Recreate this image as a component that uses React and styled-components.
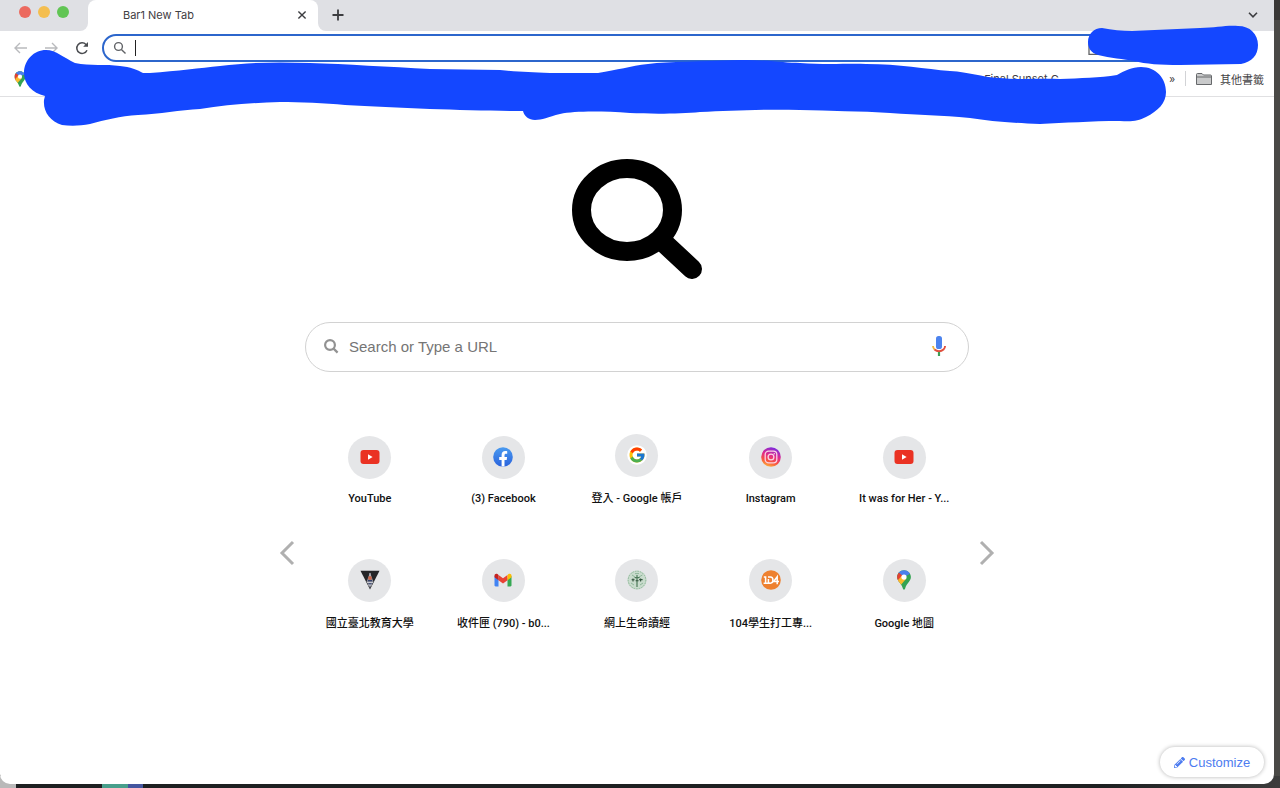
import React from "react";
import styled, { createGlobalStyle } from "styled-components";
import { FaPencilAlt } from "react-icons/fa";
import { FcGoogle } from "react-icons/fc";

const YouTubeIcon = () => (
  <svg width="20" height="20" viewBox="0 0 20 20">
    <rect x="0.5" y="3" width="19" height="14" rx="3" fill="#ea3223" />
    <path d="M8 7.2 12.6 10 8 12.8z" fill="#fff" />
  </svg>
);

const FacebookIcon = () => (
  <svg width="20" height="20" viewBox="0 0 20 20">
    <defs>
      <linearGradient id="fb" x1="0" y1="0" x2="0" y2="1">
        <stop offset="0" stopColor="#4a9bf0" />
        <stop offset="1" stopColor="#2a62dc" />
      </linearGradient>
    </defs>
    <circle cx="10" cy="10" r="9.8" fill="url(#fb)" />
    <path
      d="M8.6 19.6v-6.7H6.2V10h2.4V8c0-2.500 1.400-3.900 3.700-3.900.9 0 1.900.2 1.900.2v2.400h-1.200c-1.100 0-1.500.7-1.500 1.500V10h2.600l-.4 2.900h-2.200v6.700z"
      fill="#fff"
    />
  </svg>
);

const InstagramIcon = () => (
  <svg width="20" height="20" viewBox="0 0 20 20">
    <defs>
      <linearGradient id="ig" x1="0.25" y1="1" x2="0.6" y2="0">
        <stop offset="0" stopColor="#fdb93d" />
        <stop offset="0.3" stopColor="#f8543f" />
        <stop offset="0.6" stopColor="#e02a8c" />
        <stop offset="1" stopColor="#7a2be0" />
      </linearGradient>
    </defs>
    <circle cx="10" cy="10" r="9.8" fill="url(#ig)" />
    <g fill="none" stroke="#fbd3e4" strokeWidth="1.3">
      <rect x="4.2" y="4.2" width="11.6" height="11.6" rx="3.4" />
      <circle cx="10" cy="10" r="2.9" />
    </g>
    <circle cx="13.3" cy="6.7" r="0.8" fill="#fbd3e4" />
  </svg>
);

const GoogleIcon = () => (
  <svg width="20" height="20" viewBox="0 0 20 20">
    <circle cx="10" cy="10" r="9.8" fill="#fff" />
    <FcGoogle x="1" y="1" size={18} />
  </svg>
);

const UniversityIcon = () => (
  <svg width="20" height="20" viewBox="0 0 20 20">
    <path d="M0.5 0.8h19L10 19.6z" fill="#252628" />
    <path d="M10 2.5 6.6 11.4 10 18l3.4-6.6z" fill="#8b8d99" />
    <path d="M10 3v3.5M7 12.6h6M8 15h4" stroke="#d5d6db" strokeWidth="0.9" />
    <circle cx="10" cy="8" r="1.9" fill="#c9674a" />
    <path d="M8 10.6h4M8.4 13.8h3.2" stroke="#33416b" strokeWidth="1.1" />
  </svg>
);

const GmailIcon = () => (
  <svg width="20" height="20" viewBox="0 0 20 20">
    <path d="M1.5 6v9.3c0 .6.5 1.1 1.1 1.1h2.9V8.5z" fill="#4284f3" />
    <path d="M18.5 6v9.3c0 .6-.5 1.1-1.1 1.1h-2.9V8.5z" fill="#35a853" />
    <path d="M5.5 10.3V4.9l4.5 3.4 4.5-3.4v5.4L10 13.6z" fill="#e94235" />
    <path d="M1.5 7.3V5.5c0-1.6 1.8-2.4 3-1.4l1 .8v5.4z" fill="#c5221f" />
    <path d="M18.5 7.3V5.5c0-1.6-1.8-2.4-3-1.4l-1 .8v5.4z" fill="#fbbc04" />
  </svg>
);

const BibleIcon = () => (
  <svg width="20" height="20" viewBox="0 0 20 20">
    <circle cx="10" cy="10" r="9.6" fill="#c9dccd" />
    <g fill="none" stroke="#8fb79a">
      <circle cx="10" cy="10" r="8.8" strokeDasharray="1.6 1" />
      <path d="M5 5l3 2M12 7l3.4-2M4 13l3 2M13 15l3-2M8 3.6h4" />
    </g>
    <path d="M10 5v12M7.6 7.6h5" stroke="#4c7a59" strokeWidth="1.2" />
    <path d="M4.6 9.8h3M6 8.6v3M8.6 10.8h3M12.2 9.6h3.4M13.6 8.6v2.8" stroke="#32533c" strokeWidth="1.1" />
  </svg>
);

const JobBankIcon = () => (
  <svg width="20" height="20" viewBox="0 0 20 20">
    <circle cx="10" cy="10" r="9.8" fill="#ee8130" />
    <g fill="none" stroke="#fff" strokeWidth="1.5">
      <path d="M2.8 7h1.8v6.2M2.6 13.2h6" />
      <path d="M7 7h2.4c3.4 0 3.4 6.200 0 6.200H7.400V9" />
      <path d="M16.200 14.200V6.800L12.600 11.600h5.400" />
    </g>
  </svg>
);

const MapsIcon = ({ size = 20 }) => (
  <svg width={size} height={size} viewBox="0 0 20 20">
    <defs>
      <clipPath id="pin">
        <path d="M10 0.3c-3.9 0-6.9 3-6.9 6.8 0 4.4 4.1 6 5.6 11 .3 1 .7 1.7 1.3 1.7s1-.7 1.3-1.7c1.5-5 5.6-6.6 5.6-11 0-3.8-3-6.8-6.9-6.8z" />
      </clipPath>
    </defs>
    <g clipPath="url(#pin)">
      <path d="M0 0h20v20H0z" fill="#34a353" />
      <path d="M3 2 10 7l6.6-3.4L13 0H5z" fill="#4a80ec" />
      <path d="M4.8 2.4 10 7l-6 6.5L2 7z" fill="#e34133" />
      <path d="M3.6 10.500 8 5.500l4.400 3.100-6.200 7.200z" fill="#f9bb2d" />
    </g>
    <circle cx="10" cy="7.100" r="2.600" fill="#fff" />
  </svg>
);

const ArrowIcon = ({ right }) => (
  <svg width="14" height="14" viewBox="0 0 14 14" fill="none" stroke="#b9babd" strokeWidth="1.4">
    <path d={right ? "M1 7h12M8 2l5 5-5 5" : "M13 7H1M6 2 1 7l5 5"} />
  </svg>
);

const ReloadIcon = () => (
  <svg width="16" height="16" viewBox="0 0 16 16" fill="none" stroke="#4a4c50" strokeWidth="1.5">
    <path d="M13 10.200A5.300 5.300 0 1 1 12 4.500L13 5.500" />
    <path d="M14 2v4.800H9.200z" fill="#4a4c50" stroke="none" />
  </svg>
);

const LensIcon = () => (
  <svg width="14" height="14" viewBox="0 0 14 14" fill="none" stroke="#606266" strokeWidth="1.4">
    <circle cx="5.5" cy="5.5" r="3.9" />
    <path d="M8.4 8.4 12.5 12.5" />
  </svg>
);

const SearchIcon = () => (
  <svg width="16" height="16" viewBox="0 0 16 16" fill="none" stroke="#929292" strokeWidth="2.2">
    <circle cx="7" cy="7" r="4.9" />
    <path d="M10.6 10.6 14.6 14.6" />
  </svg>
);

const MicIcon = () => (
  <svg width="16" height="20" viewBox="0 0 16 20" fill="none">
    <rect x="5" y="0" width="6" height="13" rx="2.6" fill="#4c83ee" />
    <path d="M2 10c.1 1.500.7 2.700 1.700 3.700" stroke="#f2b93b" strokeWidth="1.900" />
    <path d="M3.500 13.500c2.500 2.300 6.500 2.300 9 0 1-.9 1.500-2.100 1.600-3.500" stroke="#e0503f" strokeWidth="1.900" />
    <path d="M8 16V20" stroke="#3c9e56" strokeWidth="2.200" />
  </svg>
);

const FolderIcon = () => (
  <svg width="16" height="14" viewBox="0 0 16 14" fill="#c9cacb" stroke="#66686b">
    <path d="M0.5 12.500v-10c0-.6.4-1 1-1H6l1.500 1.500h7c.6 0 1 .4 1 1v8.500z" />
    <path d="M.5 5h15" />
  </svg>
);

const Logo = () => (
  <svg width="132" height="120" viewBox="0 0 132 120">
    <path d="M91 82 121 110" stroke="#000" strokeWidth="20" strokeLinecap="round" />
    <ellipse cx="56" cy="51" rx="45.5" ry="41.5" fill="#fff" stroke="#000" strokeWidth="19" />
  </svg>
);

const Chevron = ({ right }) => (
  <svg width="16" height="26" viewBox="0 0 16 26" fill="none" stroke="#b0b0b0" strokeWidth="3">
    <path d={right ? "M2 2l11 11L2 24" : "M14 2 3 13l11 11"} />
  </svg>
);

// marker strokes laid over the toolbar and the bookmarks
const Marker = () => (
  <MarkerLayer viewBox="0 0 1274 130" aria-hidden="true">
    <path d="M1102 28C1094 28 1088 34 1088 42C1088 48 1091 53 1098 55C1110 58 1124 59 1134 61C1146 64 1160 65 1180 65C1200 65 1220 64 1241 64C1252 62 1258 55 1258 45C1258 34 1250 26 1238 26C1226 25 1216 28 1200 28L1132 31C1122 31 1112 30 1102 28Z" />
    <path
      d="M46 50C56 50 64 58 75 63C90 66 106 64 120 66C130 67 138 70 143 73L150 73C178 71 200 68 220 66C250 62 280 62 310 63C345 64 390 67 430 69L500 70C520 72 530 72 550 73L598 73C618 70 630 66 648 64C670 61 700 62 740 60C770 60 785 63 800 63C830 65 850 63 866 64C900 64 925 69 950 71C970 72 980 77 1000 78C1020 80 1040 78 1060 79C1080 78 1100 78 1117 75C1124 71 1132 67 1141 67C1156 67 1166 78 1166 92C1166 103 1158 111 1146 117C1138 121 1132 122 1120 121C1090 121 1065 123 1040 124C1010 123 990 121 970 118C940 115 920 115 890 113C860 111 830 111 800 110C760 109 730 111 700 112C680 114 650 114 630 113C600 111 575 111 560 114C548 117 542 120 535 120C529 120 524 116 523 111C500 111 460 110 430 109C400 108 370 106 345 105C325 103 300 102 280 102C250 103 225 105 200 109C180 110 160 114 138 115C120 116 105 120 90 124C80 126 70 126 62 125C50 121 43 112 44 100L45 96C32 93 24 84 24 73C24 60 34 50 46 50Z"
    />
  </MarkerLayer>
);

const sites = [
  { name: "YouTube", icon: <YouTubeIcon /> },
  { name: "(3) Facebook", icon: <FacebookIcon /> },
  { name: "登入 - Google 帳戶", icon: <GoogleIcon />, cjk: true },
  { name: "Instagram", icon: <InstagramIcon /> },
  { name: "It was for Her - Y...", icon: <YouTubeIcon /> },
  { name: "國立臺北教育大學", icon: <UniversityIcon />, cjk: true },
  { name: "收件匣 (790) - b0...", icon: <GmailIcon />, cjk: true },
  { name: "網上生命讀經", icon: <BibleIcon />, cjk: true },
  { name: "104學生打工專...", icon: <JobBankIcon />, cjk: true },
  { name: "Google 地圖", icon: <MapsIcon />, cjk: true },
];

const App = () => {
  return (
    <Desktop>
      <GlobalStyle />
      <Window>
        <TabStrip>
          <WindowControls>
            <Light $color="#ec6a5f" aria-label="Close window" />
            <Light $color="#f4be4f" aria-label="Minimize window" />
            <Light $color="#61c554" aria-label="Zoom window" />
          </WindowControls>
          <TabSlot>
            <Tab>
              <TabTitle>Bar1 New Tab</TabTitle>
              <IconButton aria-label="Close tab">
                <svg width="10" height="10" viewBox="0 0 10 10" stroke="#3c3d40" strokeWidth="1.4">
                  <path d="M1.400 1.400l7.200 7.200M8.600 1.400 1.400 8.600" />
                </svg>
              </IconButton>
            </Tab>
          </TabSlot>
          <StripRest>
            <IconButton aria-label="New tab">
              <svg width="12" height="12" viewBox="0 0 12 12" stroke="#3c3d40" strokeWidth="1.8">
                <path d="M6 .5v11M.5 6h11" />
              </svg>
            </IconButton>
            <IconButton aria-label="Search tabs">
              <svg width="10" height="8" viewBox="0 0 10 8" fill="none" stroke="#3c3d40" strokeWidth="1.6">
                <path d="M1 1.800l4 4 4-4" />
              </svg>
            </IconButton>
          </StripRest>
        </TabStrip>

        <Toolbar>
          <IconButton aria-label="Back">
            <ArrowIcon />
          </IconButton>
          <IconButton aria-label="Forward">
            <ArrowIcon right />
          </IconButton>
          <IconButton aria-label="Reload">
            <ReloadIcon />
          </IconButton>
          <Omnibox>
            <LensIcon />
            <Caret />
            <AddressInput aria-label="Address" />
            <svg width="14" height="14" viewBox="0 0 14 14" fill="none" stroke="#606266" strokeWidth="1.3">
              <path d="M5 1.500H1v11.800h11V9" />
            </svg>
          </Omnibox>
        </Toolbar>

        <Bookmarks>
          <MapsIcon size={16} />
          <Bookmark href="#sunset">Final Sunset G</Bookmark>
          <More aria-label="More bookmarks">»</More>
          <Divider />
          <Folder>
            <FolderIcon />
            其他書籤
          </Folder>
        </Bookmarks>

        <Page>
          <Logo />
          <SearchBox>
            <SearchIcon />
            <SearchInput placeholder="Search or Type a URL" aria-label="Search or Type a URL" />
            <IconButton aria-label="Search by voice">
              <MicIcon />
            </IconButton>
          </SearchBox>
          <Carousel>
            <IconButton aria-label="Previous">
              <Chevron />
            </IconButton>
            <Tiles>
              {sites.map((site) => (
                <Tile href="#site" key={site.name}>
                  <Circle>{site.icon}</Circle>
                  <Label $cjk={site.cjk}>{site.name}</Label>
                </Tile>
              ))}
            </Tiles>
            <IconButton aria-label="Next">
              <Chevron right />
            </IconButton>
          </Carousel>
        </Page>

        <Footer>
          <Customize>
            <FaPencilAlt size={11} />
            Customize
          </Customize>
        </Footer>
        <Marker />
      </Window>
    </Desktop>
  );
};

const GlobalStyle = createGlobalStyle`
  * {
    box-sizing: border-box;
  }
  body {
    margin: 0;
    font-family: Roboto, "Noto Sans CJK TC", sans-serif;
    color: #111;
  }
  svg {
    display: block;
    flex-shrink: 0;
  }
  button,
  input {
    border: 0;
    padding: 0;
    background: none;
    font: inherit;
    color: inherit;
  }
  a {
    color: inherit;
    text-decoration: none;
  }
`;

const Desktop = styled.div`
  min-height: 100vh;
  padding: 0 6px 4px 0;
  background: linear-gradient(
      90deg,
      #b9b9b9 16px,
      #1d2021 16px 102px,
      #479f8b 102px 128px,
      #44569f 128px 143px,
      #1d2021 143px 86%,
      #3c3c3c
    )
    bottom / 100% 12px no-repeat,
    linear-gradient(#393836 20px, #4a4946 20px);
`;

const Window = styled.div`
  position: relative;
  display: flex;
  flex-direction: column;
  min-height: calc(100vh - 4px);
  background: #fff;
  border-radius: 0 0 10px 10px;
  overflow: hidden;
`;

const TabStrip = styled.div`
  display: flex;
  height: 31px;
`;

const WindowControls = styled.div`
  display: flex;
  gap: 7px;
  width: 88px;
  padding: 6px 0 0 19px;
  background: #dfe0e4;
  border-radius: 0 0 8px 0;
`;

const Light = styled.button`
  width: 12px;
  height: 12px;
  border-radius: 50%;
  background: ${({ $color }) => $color};
`;

const TabSlot = styled.div`
  width: 230px;
  background: linear-gradient(#dfe0e4 50%, #fff 50%);
`;

const Tab = styled.div`
  display: flex;
  align-items: center;
  justify-content: space-between;
  height: 100%;
  padding: 0 11px 1px 35px;
  background: #fff;
  border-radius: 8px 8px 0 0;
`;

const TabTitle = styled.span`
  font-family: Inter, sans-serif;
  font-size: 11px;
  line-height: 16px;
  color: #3f4043;
`;

const StripRest = styled.div`
  flex: 1;
  display: flex;
  align-items: center;
  justify-content: space-between;
  padding: 0 16px 1px 14px;
  background: #dfe0e4;
  border-radius: 0 0 0 8px;
`;

const IconButton = styled.button`
  display: flex;
  flex-shrink: 0;
  align-items: center;
  justify-content: center;
`;

const Toolbar = styled.div`
  display: flex;
  align-items: center;
  gap: 16px;
  height: 34px;
  padding: 0 124px 0 14px;
`;

const Omnibox = styled.div`
  flex: 1;
  display: flex;
  align-items: center;
  height: 28px;
  margin-left: -4px;
  padding: 0 46px 0 9px;
  border: 2px solid #2c66cc;
  border-radius: 14px;
`;

const Caret = styled.span`
  width: 1px;
  height: 16px;
  margin-left: 8px;
  background: #222;
`;

const AddressInput = styled.input`
  flex: 1;
  min-width: 0;
  font-size: 13px;
  outline: none;
`;

const Bookmarks = styled.div`
  display: flex;
  align-items: center;
  height: 32px;
  padding: 0 10px 4px 12px;
  border-bottom: 1px solid #e0e0e2;
  font-size: 11px;
  color: #3f4043;
`;

const Bookmark = styled.a`
  margin-left: auto;
  margin-right: 110px;
  font-family: Inter, "Noto Sans CJK TC", sans-serif;
`;

const More = styled.button`
  font-size: 13px;
`;

const Divider = styled.span`
  width: 1px;
  height: 15px;
  margin: 0 10px;
  background: #d2d3d6;
`;

const Folder = styled.button`
  display: flex;
  align-items: center;
  gap: 8px;
`;

const Page = styled.main`
  display: flex;
  flex-direction: column;
  align-items: center;
  padding-top: 62px;
`;

const SearchBox = styled.div`
  display: flex;
  align-items: center;
  width: 664px;
  max-width: 90%;
  height: 50px;
  margin: 43px 0 36px;
  padding: 0 21px 2px 17px;
  border: 1px solid #d2d2d2;
  border-radius: 25px;
`;

const SearchInput = styled.input`
  flex: 1;
  min-width: 0;
  margin-left: 10px;
  font-family: "Liberation Sans", Arial, sans-serif;
  font-size: 15px;
  outline: none;
  &::placeholder {
    color: #757575;
    opacity: 1;
  }
`;

const Carousel = styled.div`
  display: flex;
  align-items: center;
  gap: 8px;
  & > button {
    margin-top: 40px;
  }
`;

const Tiles = styled.div`
  display: grid;
  grid-template-columns: repeat(5, 1fr);
  grid-auto-rows: 125px;
  align-items: center;
  width: 668px;
  max-width: 80vw;
`;

const Tile = styled.a`
  display: flex;
  flex-direction: column;
  align-items: center;
  gap: 13px;
`;

const Circle = styled.span`
  display: flex;
  align-items: center;
  justify-content: center;
  width: 43px;
  height: 43px;
  border-radius: 50%;
  background: #e5e6e8;
`;

const Label = styled.span`
  font-size: 11px;
  line-height: ${({ $cjk }) => ($cjk ? "18px" : "14px")};
  font-weight: 500;
  white-space: nowrap;
`;

const Footer = styled.footer`
  display: flex;
  justify-content: flex-end;
  margin-top: auto;
  padding: 7px 10px;
`;

const Customize = styled.button`
  display: flex;
  align-items: center;
  justify-content: center;
  gap: 4px;
  width: 104px;
  height: 30px;
  border-radius: 15px;
  box-shadow: 0 0 4px rgba(0, 0, 0, 0.3);
  font-family: "Liberation Sans", Arial, sans-serif;
  font-size: 13px;
  color: #4d7cf0;
`;

const MarkerLayer = styled.svg`
  position: absolute;
  top: 0;
  left: 0;
  width: 100%;
  fill: #1447ff;
  pointer-events: none;
`;

export default App;
